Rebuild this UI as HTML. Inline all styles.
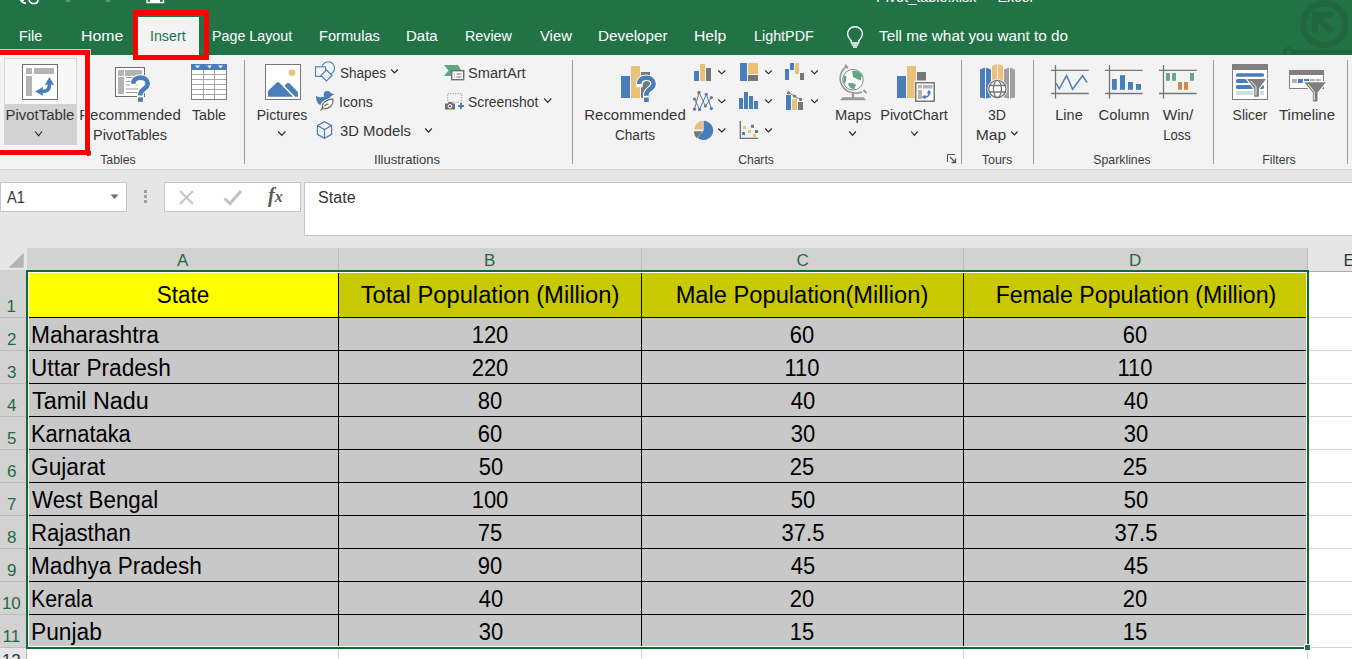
<!DOCTYPE html>
<html><head><meta charset="utf-8"><style>
html,body{margin:0;padding:0;}
body{width:1352px;height:659px;overflow:hidden;position:relative;background:#fff;font-family:"Liberation Sans",sans-serif;}
.t{position:absolute;white-space:nowrap;}
.r{position:absolute;}
</style></head><body>
<div class="r" style="left:0px;top:0px;width:1352px;height:55px;background:#217346;"></div><div class="t" style="top:-10.70px;font-size:15px;line-height:15px;color:#ffffff;left:875.54px;transform-origin:0 0;transform:scaleX(0.9645);white-space:pre;">Pivot_table.xlsx  -  Excel</div><svg class="r" style="left:18px;top:0px;" width="24" height="6" viewBox="0 0 24 6"><path d="M3 0 Q4 3 8 3.2 M11 0 Q12 4 17 3.5 Q20 3 20 0" fill="none" stroke="#fff" stroke-width="1.6"/><path d="M2 0.5 L6 0.5" stroke="#fff" stroke-width="1.5"/></svg><div class="r" style="left:66px;top:0px;width:4px;height:2px;background:#5a9a76;"></div><div class="r" style="left:106px;top:0px;width:4px;height:2px;background:#5a9a76;"></div><svg class="r" style="left:146px;top:0px;" width="19" height="4" viewBox="0 0 19 4"><path d="M1 0 V2.5 H17.5 V0" fill="none" stroke="#fff" stroke-width="1.4"/><rect x="4" y="0" width="10" height="2" fill="#fff"/></svg><svg class="r" style="left:1270px;top:0px;" width="82" height="60" viewBox="0 0 82 60"><circle cx="54.4" cy="24.2" r="20.9" fill="none" stroke="#22663f" stroke-width="6.6"/><rect x="42" y="11.8" width="20.8" height="6" fill="#22663f"/><rect x="42" y="11.8" width="6" height="21" fill="#22663f"/><path d="M45 15 L61.5 31.5" stroke="#22663f" stroke-width="6.5"/><rect x="21" y="50" width="61" height="4.2" fill="#22663f"/><circle cx="18.4" cy="52" r="4" fill="none" stroke="#22663f" stroke-width="3"/></svg><div class="r" style="left:138px;top:17px;width:61px;height:38px;background:#f3f3f3;"></div><div class="t" style="top:28.38px;font-size:15.5px;line-height:15.5px;color:#ffffff;left:18.77px;transform-origin:0 0;transform:scaleX(0.9291);">File</div><div class="t" style="top:28.38px;font-size:15.5px;line-height:15.5px;color:#ffffff;left:81.18px;transform-origin:0 0;transform:scaleX(1.0220);">Home</div><div class="t" style="top:28.38px;font-size:15.5px;line-height:15.5px;color:#217346;left:149.58px;transform-origin:0 0;transform:scaleX(0.9179);">Insert</div><div class="t" style="top:28.38px;font-size:15.5px;line-height:15.5px;color:#ffffff;left:212.38px;transform-origin:0 0;transform:scaleX(0.9212);">Page Layout</div><div class="t" style="top:28.38px;font-size:15.5px;line-height:15.5px;color:#ffffff;left:318.86px;transform-origin:0 0;transform:scaleX(0.9413);">Formulas</div><div class="t" style="top:28.38px;font-size:15.5px;line-height:15.5px;color:#ffffff;left:406.13px;transform-origin:0 0;transform:scaleX(0.9682);">Data</div><div class="t" style="top:28.38px;font-size:15.5px;line-height:15.5px;color:#ffffff;left:465.38px;transform-origin:0 0;transform:scaleX(0.9224);">Review</div><div class="t" style="top:28.38px;font-size:15.5px;line-height:15.5px;color:#ffffff;left:539.60px;transform-origin:0 0;transform:scaleX(0.9554);">View</div><div class="t" style="top:28.38px;font-size:15.5px;line-height:15.5px;color:#ffffff;left:598.21px;transform-origin:0 0;transform:scaleX(0.9858);">Developer</div><div class="t" style="top:28.38px;font-size:15.5px;line-height:15.5px;color:#ffffff;left:694.39px;transform-origin:0 0;transform:scaleX(1.0146);">Help</div><div class="t" style="top:28.38px;font-size:15.5px;line-height:15.5px;color:#ffffff;left:753.68px;transform-origin:0 0;transform:scaleX(0.9249);">LightPDF</div><div class="t" style="top:28.38px;font-size:15.5px;line-height:15.5px;color:#ffffff;left:878.50px;transform-origin:0 0;transform:scaleX(0.9887);">Tell me what you want to do</div><svg class="r" style="left:845px;top:25px;" width="20" height="23" viewBox="0 0 20 23"><path d="M10 1.8 C5.4 1.8 2.6 5.2 2.6 9 C2.6 12.2 4.6 13.8 6.3 15.8 L6.3 18 L13.7 18 L13.7 15.8 C15.4 13.8 17.4 12.2 17.4 9 C17.4 5.2 14.6 1.8 10 1.8 Z" fill="none" stroke="#ffffff" stroke-width="1.4"/><path d="M6.8 20 H13.2 M8 22 H12" stroke="#ffffff" stroke-width="1.3"/></svg><div class="r" style="left:0px;top:55px;width:1352px;height:114px;background:#f3f3f3;"></div><div class="r" style="left:0px;top:169px;width:1352px;height:1px;background:#d4d4d4;"></div><div class="r" style="left:244px;top:60px;width:1px;height:104px;background:#9c9c9c;"></div><div class="r" style="left:572px;top:60px;width:1px;height:104px;background:#9c9c9c;"></div><div class="r" style="left:961px;top:60px;width:1px;height:104px;background:#9c9c9c;"></div><div class="r" style="left:1033px;top:60px;width:1px;height:104px;background:#9c9c9c;"></div><div class="r" style="left:1213px;top:60px;width:1px;height:104px;background:#9c9c9c;"></div><div class="r" style="left:1347px;top:60px;width:1px;height:104px;background:#9c9c9c;"></div><div class="t" style="top:153.10px;font-size:13px;line-height:13px;color:#3b3b3b;left:-181.74px;width:600px;text-align:center;transform-origin:50% 0;transform:scaleX(0.9454);">Tables</div><div class="t" style="top:153.10px;font-size:13px;line-height:13px;color:#3b3b3b;left:107.25px;width:600px;text-align:center;transform-origin:50% 0;transform:scaleX(1.0023);">Illustrations</div><div class="t" style="top:153.10px;font-size:13px;line-height:13px;color:#3b3b3b;left:456.32px;width:600px;text-align:center;transform-origin:50% 0;transform:scaleX(0.9307);">Charts</div><div class="t" style="top:153.10px;font-size:13px;line-height:13px;color:#3b3b3b;left:696.71px;width:600px;text-align:center;transform-origin:50% 0;transform:scaleX(0.9570);">Tours</div><div class="t" style="top:153.10px;font-size:13px;line-height:13px;color:#3b3b3b;left:822.41px;width:600px;text-align:center;transform-origin:50% 0;transform:scaleX(0.9461);">Sparklines</div><div class="t" style="top:153.10px;font-size:13px;line-height:13px;color:#3b3b3b;left:979.24px;width:600px;text-align:center;transform-origin:50% 0;transform:scaleX(0.9487);">Filters</div><div class="r" style="left:4px;top:58px;width:73px;height:46px;background:#f7f7f7;box-sizing:border-box;border:1px solid #d6d6d6;border-bottom:none;"></div><div class="r" style="left:4px;top:104px;width:73px;height:41px;background:#d2d2d2;"></div><svg class="r" style="left:22px;top:64px;" width="36" height="36" viewBox="0 0 36 36"><rect x="0.5" y="0.5" width="35" height="35" fill="#fff" stroke="#6e6e6e"/><rect x="4" y="4" width="6" height="6" fill="#b3b3b3"/><rect x="12" y="4" width="20" height="6" fill="#b3b3b3"/><rect x="4" y="12" width="6" height="20" fill="#b3b3b3"/><path d="M27.4 18 L27.4 21 C27.4 25.5 25 27.4 21 27.4 L18 27.4" fill="none" stroke="#4a7ebb" stroke-width="3.6"/><path d="M22.7 21.3 L27.4 13 L32.1 21.3 L27.4 20 Z" fill="#4a7ebb"/><path d="M21.3 22.7 L13 27.4 L21.3 32.1 L20 27.4 Z" fill="#4a7ebb"/></svg><div class="t" style="top:107.38px;font-size:15.5px;line-height:15.5px;color:#363636;left:-260.28px;width:600px;text-align:center;transform-origin:50% 0;transform:scaleX(0.9615);">PivotTable</div><svg class="r" style="left:34px;top:130px;" width="10" height="8" viewBox="0 0 10 8"><path d="M1.2 1.5 L4.6 5.8 L7.9 1.5" fill="none" stroke="#262626" stroke-width="1.15"/></svg><svg class="r" style="left:113px;top:65px;" width="40" height="40" viewBox="0 0 40 40"><rect x="2.5" y="2.5" width="29" height="29" fill="#fff" stroke="#6e6e6e"/><rect x="5" y="5" width="6" height="6" fill="#b3b3b3"/><rect x="12" y="5" width="17" height="6" fill="#b3b3b3"/><rect x="5" y="12" width="6" height="17" fill="#b3b3b3"/><path d="M13 12.5 H25 M13 16.5 H25 M13 20 H25 M13 24 H25 M13 27.5 H25" stroke="#9a9a9a" stroke-width="1"/><g transform="translate(17.5,10.2)"><path d="M2.8 8.6 C2.8 4.3 6 2.4 10 2.4 C14.2 2.4 17.2 5 17.2 8.4 C17.2 11.5 14.8 12.8 12.8 14.4 C11 15.8 9.9 17 9.9 19.5 L9.9 20.3" fill="none" stroke="#fff" stroke-width="6.6" stroke-linecap="square"/><path d="M2.8 8.6 C2.8 4.3 6 2.4 10 2.4 C14.2 2.4 17.2 5 17.2 8.4 C17.2 11.5 14.8 12.8 12.8 14.4 C11 15.8 9.9 17 9.9 19.5 L9.9 20.3" fill="none" stroke="#4a7ebb" stroke-width="4.6"/><rect x="7" y="21.5" width="6" height="5.8" fill="#fff"/><rect x="7.6" y="22.1" width="4.8" height="4.6" fill="#4a7ebb"/></g></svg><div class="t" style="top:107.38px;font-size:15.5px;line-height:15.5px;color:#363636;left:-169.88px;width:600px;text-align:center;transform-origin:50% 0;transform:scaleX(0.9653);">Recommended</div><div class="t" style="top:127.38px;font-size:15.5px;line-height:15.5px;color:#363636;left:-170.33px;width:600px;text-align:center;transform-origin:50% 0;transform:scaleX(0.9336);">PivotTables</div><svg class="r" style="left:191px;top:64px;" width="36" height="36" viewBox="0 0 36 36"><rect x="0" y="0" width="36" height="36" fill="#fff"/><path d="M1 10.5 H35" stroke="#a6a6a6" stroke-width="1"/><path d="M1 15.5 H35" stroke="#a6a6a6" stroke-width="1"/><path d="M1 20.5 H35" stroke="#a6a6a6" stroke-width="1"/><path d="M1 25.5 H35" stroke="#a6a6a6" stroke-width="1"/><path d="M1 30.5 H35" stroke="#a6a6a6" stroke-width="1"/><path d="M12.5 6 V35 M23.5 6 V35" stroke="#a6a6a6"/><rect x="0.5" y="0.5" width="35" height="35" fill="none" stroke="#808080"/><rect x="0" y="0" width="36" height="6" fill="#4a7ebb"/><path d="M4 1.5 L9 1.5 L6.5 4.2 Z M16 1.5 L21 1.5 L18.5 4.2 Z M27 1.5 L32 1.5 L29.5 4.2 Z" fill="#fff"/></svg><div class="t" style="top:107.38px;font-size:15.5px;line-height:15.5px;color:#363636;left:-90.96px;width:600px;text-align:center;transform-origin:50% 0;transform:scaleX(0.9195);">Table</div><svg class="r" style="left:265px;top:64px;" width="36" height="36" viewBox="0 0 36 36"><rect x="0.5" y="0.5" width="35" height="35" fill="#fff" stroke="#777"/><circle cx="27" cy="8.7" r="3.3" fill="#e9c17a"/><path d="M3 32.8 L3 27.1 L12.1 18.2 L13.9 18.2 L28.1 32.8 Z" fill="#4a7ebb"/><path d="M19.4 21.7 L22.3 19.1 L24.1 19.1 L32.9 28 L32.9 32.8 L30.1 32.8 Z" fill="#4a7ebb"/></svg><div class="t" style="top:107.38px;font-size:15.5px;line-height:15.5px;color:#363636;left:-18.07px;width:600px;text-align:center;transform-origin:50% 0;transform:scaleX(0.9051);">Pictures</div><svg class="r" style="left:277px;top:130px;" width="10" height="7" viewBox="0 0 10 7"><path d="M1.2 1.5 L4.8 5.4 L8.4 1.5" fill="none" stroke="#262626" stroke-width="1.15"/></svg><svg class="r" style="left:313px;top:60px;" width="24" height="24" viewBox="0 0 24 24"><circle cx="15.2" cy="8.2" r="6.4" fill="none" stroke="#4a7ebb" stroke-width="1.1"/><rect x="2.5" y="6.8" width="10" height="9.6" fill="#f3f3f3" stroke="#4a7ebb" stroke-width="1.1"/><path d="M13.5 10 L19 15.5 L13.5 21 L8 15.5 Z" fill="#f3f3f3" stroke="#4a7ebb" stroke-width="1.1"/></svg><div class="t" style="top:65.38px;font-size:15.5px;line-height:15.5px;color:#363636;left:339.50px;transform-origin:0 0;transform:scaleX(0.8747);">Shapes</div><svg class="r" style="left:390px;top:68px;" width="10" height="7" viewBox="0 0 10 7"><path d="M1.2 1.5 L4.5 4.9 L7.8 1.5" fill="none" stroke="#262626" stroke-width="1.15"/></svg><svg class="r" style="left:312px;top:88px;" width="26" height="26" viewBox="0 0 26 26"><circle cx="15.4" cy="6.6" r="3.7" fill="#4a7ebb"/><path d="M18 4.8 L22.2 6.2 L18 8.8 Z" fill="#4a7ebb"/><path d="M4 8 C6.5 9.8 9.5 9.6 12.5 8.6 L18.2 9.6 C16.5 11.5 13 12 10.5 13.5 C9.5 14.5 9 15.8 8.5 17 C5.5 16 4 12.5 4 8 Z" fill="#4a7ebb"/><path d="M10.5 20.7 C9.3 16 13 11.6 20.8 11.2 C21.6 17.5 17.5 21.3 10.5 20.7 Z" fill="#fff" stroke="#f3f3f3" stroke-width="2.6"/><path d="M10.5 20.7 C9.3 16 13 11.6 20.8 11.2 C21.6 17.5 17.5 21.3 10.5 20.7 Z" fill="#fff" stroke="#666" stroke-width="1.2"/><path d="M12.3 18.3 C13.8 16.6 15 16 16.2 15.9 M8.3 22.6 L11.6 19.4" fill="none" stroke="#666" stroke-width="1.1"/></svg><div class="t" style="top:94.38px;font-size:15.5px;line-height:15.5px;color:#363636;left:338.59px;transform-origin:0 0;transform:scaleX(0.9147);">Icons</div><svg class="r" style="left:315px;top:120px;" width="19" height="20" viewBox="0 0 19 20"><path d="M9.5 1.8 L16.6 5.6 L16.6 14.4 L9.5 18.2 L2.4 14.4 L2.4 5.6 Z M2.4 5.6 L9.5 9.6 L16.6 5.6 M9.5 9.6 V18.2" fill="none" stroke="#4a7ebb" stroke-width="1.2"/></svg><div class="t" style="top:123.38px;font-size:15.5px;line-height:15.5px;color:#363636;left:339.50px;transform-origin:0 0;transform:scaleX(0.9578);">3D Models</div><svg class="r" style="left:424px;top:127px;" width="10" height="7" viewBox="0 0 10 7"><path d="M1.2 1.5 L4.5 5.2 L7.8 1.5" fill="none" stroke="#262626" stroke-width="1.15"/></svg><svg class="r" style="left:443px;top:64px;" width="22" height="17" viewBox="0 0 22 17"><path d="M1 1 L15 1 L18 6 L10 6 L10 12 L1 12 L5.5 6.5 Z" fill="#5fa882"/><rect x="8.7" y="6.7" width="12" height="9" fill="#fff" stroke="#6f6f6f" stroke-width="1.4"/><path d="M11 10 H12 M13.5 10 H18.5 M11 13 H12 M13.5 13 H18.5" stroke="#777" stroke-width="1"/></svg><div class="t" style="top:65.38px;font-size:15.5px;line-height:15.5px;color:#363636;left:468.40px;transform-origin:0 0;transform:scaleX(0.9412);">SmartArt</div><svg class="r" style="left:444px;top:92px;" width="22" height="19" viewBox="0 0 22 19"><rect x="3.7" y="1.7" width="14" height="8.5" fill="none" stroke="#888" stroke-width="1" stroke-dasharray="1 1.5"/><path d="M1 11.5 L4 11.5 L5 10 L8 10 L9 11.5 L11 11.5 L11 17.5 L1 17.5 Z" fill="#6f6f6f"/><circle cx="6" cy="14.3" r="1.8" fill="none" stroke="#fff" stroke-width="1"/><path d="M17 11 V17 M14 14 H20" stroke="#4a7ebb" stroke-width="2"/></svg><div class="t" style="top:94.38px;font-size:15.5px;line-height:15.5px;color:#363636;left:468.40px;transform-origin:0 0;transform:scaleX(0.8976);">Screenshot</div><svg class="r" style="left:543px;top:97px;" width="10" height="7" viewBox="0 0 10 7"><path d="M1.2 1.5 L4.8 5.3 L8.3 1.5" fill="none" stroke="#262626" stroke-width="1.15"/></svg><svg class="r" style="left:618px;top:63px;" width="42" height="42" viewBox="0 0 42 42"><rect x="3" y="13" width="9" height="22" fill="#4a7ebb"/><rect x="13" y="3" width="9" height="32" fill="#e9c17a"/><rect x="23" y="9" width="9" height="26" fill="#777777"/><g transform="translate(18.4,12.4)"><path d="M2.8 8.6 C2.8 4.3 6 2.4 10 2.4 C14.2 2.4 17.2 5 17.2 8.4 C17.2 11.5 14.8 12.8 12.8 14.4 C11 15.8 9.9 17 9.9 19.5 L9.9 20.3" fill="none" stroke="#fff" stroke-width="6.6" stroke-linecap="square"/><path d="M2.8 8.6 C2.8 4.3 6 2.4 10 2.4 C14.2 2.4 17.2 5 17.2 8.4 C17.2 11.5 14.8 12.8 12.8 14.4 C11 15.8 9.9 17 9.9 19.5 L9.9 20.3" fill="none" stroke="#4a7ebb" stroke-width="4.6"/><rect x="7" y="21.5" width="6" height="5.8" fill="#fff"/><rect x="7.6" y="22.1" width="4.8" height="4.6" fill="#4a7ebb"/></g></svg><div class="t" style="top:107.38px;font-size:15.5px;line-height:15.5px;color:#363636;left:335.32px;width:600px;text-align:center;transform-origin:50% 0;transform:scaleX(0.9653);">Recommended</div><div class="t" style="top:127.38px;font-size:15.5px;line-height:15.5px;color:#363636;left:335.39px;width:600px;text-align:center;transform-origin:50% 0;transform:scaleX(0.8780);">Charts</div><svg class="r" style="left:693px;top:62px;" width="20" height="20" viewBox="0 0 20 20"><rect x="1" y="9" width="5" height="10" fill="#4a7ebb"/><rect x="7" y="2" width="5" height="17" fill="#e9c17a"/><rect x="13" y="6" width="5" height="13" fill="#777777"/></svg><svg class="r" style="left:739px;top:62px;" width="20" height="20" viewBox="0 0 20 20"><rect x="1" y="1" width="7" height="18" fill="#4a7ebb"/><rect x="9" y="1" width="10" height="11" fill="#e9c17a"/><rect x="9" y="13" width="10" height="6" fill="#777777"/></svg><svg class="r" style="left:784px;top:62px;" width="21" height="20" viewBox="0 0 21 20"><rect x="1" y="7" width="4" height="11" fill="#4a7ebb"/><rect x="6" y="1" width="4" height="7" fill="#4a7ebb"/><rect x="11" y="1" width="4" height="11" fill="#e9c17a"/><rect x="16" y="11" width="4" height="7" fill="#777777"/></svg><svg class="r" style="left:692px;top:90px;" width="22" height="22" viewBox="0 0 22 22"><path d="M2.5 19.2 L7 2.3 L13.4 16 L19.4 7.6" fill="none" stroke="#777" stroke-width="1"/><path d="M2.5 9 L7.6 19.5 L14.3 4.3 L19.4 18.6" fill="none" stroke="#4a7ebb" stroke-width="1"/><circle cx="2.5" cy="19.2" r="1.6" fill="#777"/><circle cx="7" cy="2.3" r="1.6" fill="#777"/><circle cx="13.4" cy="16" r="1.6" fill="#777"/><circle cx="19.4" cy="7.6" r="1.6" fill="#777"/><circle cx="2.5" cy="9" r="1.6" fill="#4a7ebb"/><circle cx="7.6" cy="19.5" r="1.6" fill="#4a7ebb"/><circle cx="14.3" cy="4.3" r="1.6" fill="#4a7ebb"/><circle cx="19.4" cy="18.6" r="1.6" fill="#4a7ebb"/></svg><svg class="r" style="left:739px;top:91px;" width="20" height="19" viewBox="0 0 20 19"><rect x="0" y="7" width="4" height="11" fill="#4a7ebb"/><rect x="5" y="1" width="4" height="17" fill="#4a7ebb"/><rect x="10" y="5" width="4" height="13" fill="#4a7ebb"/><rect x="15" y="10" width="4" height="8" fill="#4a7ebb"/></svg><svg class="r" style="left:785px;top:91px;" width="20" height="20" viewBox="0 0 20 20"><path d="M3.4 1.3 L9.5 5.1 L15.6 8.4" fill="none" stroke="#777" stroke-width="1"/><rect x="1" y="4" width="5" height="15" fill="#4a7ebb"/><rect x="7" y="8" width="5" height="11" fill="#e9c17a"/><rect x="13" y="11" width="5" height="8" fill="#777777"/><circle cx="3.4" cy="1.8" r="1.6" fill="#777"/><circle cx="9.5" cy="5.1" r="1.6" fill="#777"/><circle cx="15.6" cy="8.4" r="1.6" fill="#777"/></svg><svg class="r" style="left:693px;top:120px;" width="22" height="22" viewBox="0 0 22 22"><path d="M10.6 10.4 L10.6 0.8000000000000007 A9.6 9.6 0 1 1 4.43 17.75 Z" fill="#4a7ebb"/><path d="M9.799999999999999 11.0 L3.63 18.35 A9.6 9.6 0 0 1 1.00 11.20 L9.799999999999999 11.200000000000001 Z" fill="#777777"/><path d="M9.799999999999999 9.6 L1.00 9.60 A9.6 9.6 0 0 1 9.799999999999999 0.8000000000000007 Z" fill="#e9c17a"/></svg><svg class="r" style="left:739px;top:120px;" width="20" height="20" viewBox="0 0 20 20"><path d="M1.3 1 V18.3 H19" fill="none" stroke="#6f6f6f" stroke-width="1.3"/><rect x="4" y="6" width="3" height="3" fill="#e9c17a"/><rect x="12" y="4.8" width="3" height="3" fill="#4a7ebb"/><rect x="9" y="10" width="3" height="3" fill="#e9c17a"/><rect x="3" y="12" width="3" height="3" fill="#4a7ebb"/><rect x="16" y="10" width="3" height="3" fill="#4a7ebb"/><rect x="14" y="14" width="3" height="3" fill="#e9c17a"/></svg><svg class="r" style="left:717px;top:69px;" width="10" height="7" viewBox="0 0 10 7"><path d="M1.2 1.5 L4.8 4.8 L8.3 1.5" fill="none" stroke="#262626" stroke-width="1.15"/></svg><svg class="r" style="left:717px;top:98px;" width="10" height="7" viewBox="0 0 10 7"><path d="M1.2 1.5 L4.8 4.8 L8.3 1.5" fill="none" stroke="#262626" stroke-width="1.15"/></svg><svg class="r" style="left:764px;top:69px;" width="9" height="7" viewBox="0 0 9 7"><path d="M1.2 1.5 L4.4 4.8 L7.7 1.5" fill="none" stroke="#262626" stroke-width="1.15"/></svg><svg class="r" style="left:764px;top:98px;" width="9" height="7" viewBox="0 0 9 7"><path d="M1.2 1.5 L4.4 4.8 L7.7 1.5" fill="none" stroke="#262626" stroke-width="1.15"/></svg><svg class="r" style="left:810px;top:69px;" width="10" height="7" viewBox="0 0 10 7"><path d="M1.2 1.5 L4.5 4.8 L7.8 1.5" fill="none" stroke="#262626" stroke-width="1.15"/></svg><svg class="r" style="left:810px;top:98px;" width="10" height="7" viewBox="0 0 10 7"><path d="M1.2 1.5 L4.5 4.8 L7.8 1.5" fill="none" stroke="#262626" stroke-width="1.15"/></svg><svg class="r" style="left:717px;top:127px;" width="10" height="7" viewBox="0 0 10 7"><path d="M1.2 1.5 L4.8 4.9 L8.3 1.5" fill="none" stroke="#262626" stroke-width="1.15"/></svg><svg class="r" style="left:764px;top:127px;" width="9" height="7" viewBox="0 0 9 7"><path d="M1.2 1.5 L4.4 4.9 L7.7 1.5" fill="none" stroke="#262626" stroke-width="1.15"/></svg><svg class="r" style="left:836px;top:62px;" width="34" height="40" viewBox="0 0 34 40"><path d="M10.5 4.5 C4 9 2.5 17 6 23.5 C10 30 18 33 26 30" fill="none" stroke="#9a9a9a" stroke-width="1.6"/><path d="M9 3 L12 6 M27.5 28 L30.5 31" stroke="#9a9a9a" stroke-width="1.8"/><circle cx="17" cy="17.7" r="10.3" fill="#fff" stroke="#888" stroke-width="1"/><path d="M16 9 C19 8 24 9 26 13 L25 18 C22 18 20 16 17 15 Z M7.5 14 C9 13 10.5 14 10.5 16 L9 22 L7.5 21 Z M13 21 C16 21 19 21 20 23 L18 27.5 C15 27 13 25 12 22 Z" fill="#5fa882"/><path d="M17 30 V36" stroke="#9a9a9a" stroke-width="2.2"/><path d="M4 38.2 L6.5 35.2 L27.5 35.2 L30 38.2 Z" fill="#9a9a9a"/></svg><div class="t" style="top:107.38px;font-size:15.5px;line-height:15.5px;color:#363636;left:552.70px;width:600px;text-align:center;transform-origin:50% 0;transform:scaleX(0.9528);">Maps</div><svg class="r" style="left:848px;top:130px;" width="10" height="7" viewBox="0 0 10 7"><path d="M1.2 1.5 L4.5 5.3 L7.8 1.5" fill="none" stroke="#262626" stroke-width="1.15"/></svg><svg class="r" style="left:895px;top:64px;" width="42" height="40" viewBox="0 0 42 40"><rect x="2" y="12" width="9" height="22" fill="#4a7ebb"/><rect x="12" y="2" width="9" height="32" fill="#e9c17a"/><rect x="22" y="8" width="9" height="9" fill="#777777"/><rect x="20" y="17" width="21" height="22" fill="#fff" stroke="#f3f3f3" stroke-width="1"/><rect x="20.75" y="18.75" width="18.5" height="18.5" fill="#fff" stroke="#777" stroke-width="1.5"/><rect x="23" y="21" width="4" height="3.5" fill="#b3b3b3"/><rect x="28" y="21" width="9.5" height="3.5" fill="#b3b3b3"/><rect x="23" y="26" width="4" height="9" fill="#b3b3b3"/><path d="M34 29 C34 32 33 33 30 33" fill="none" stroke="#4a7ebb" stroke-width="1.6"/><path d="M31.8 29.5 L34 25.5 L36.2 29.5 Z M30.5 30.8 L26.5 33 L30.5 35.2 Z" fill="#4a7ebb"/></svg><div class="t" style="top:107.38px;font-size:15.5px;line-height:15.5px;color:#363636;left:614.31px;width:600px;text-align:center;transform-origin:50% 0;transform:scaleX(0.9326);">PivotChart</div><svg class="r" style="left:910px;top:130px;" width="9" height="7" viewBox="0 0 9 7"><path d="M1.2 1.5 L4.4 5.3 L7.7 1.5" fill="none" stroke="#262626" stroke-width="1.15"/></svg><svg class="r" style="left:946px;top:153px;" width="12" height="12" viewBox="0 0 12 12"><path d="M1.5 9 V1.5 H9" fill="none" stroke="#555" stroke-width="1.1"/><path d="M4 4 L9.5 9.5 M5.5 9.5 H9.5 V5.5" fill="none" stroke="#555" stroke-width="1.3"/></svg><svg class="r" style="left:978px;top:62px;" width="40" height="40" viewBox="0 0 40 40"><path d="M2 7.5 L7 5.5 L7 36.5 L2 35.5 Z M8 5.5 L13 7.5 L13 35.5 L8 36.5 Z" fill="#4a7ebb"/><path d="M14 4 L19 2 L19 20 L14 20 Z M20 2 L25 4 L25 20 L20 20 Z" fill="#e9c17a"/><path d="M26 7.5 L31 5.5 L31 36.5 L26 35.5 Z M32 5.5 L37 7.5 L37 35.5 L32 36.5 Z" fill="#a0a0a0"/><circle cx="19.4" cy="27" r="10" fill="#f3f3f3"/><circle cx="19.4" cy="27" r="8.6" fill="#fff" stroke="#777" stroke-width="1.3"/><ellipse cx="19.4" cy="27" rx="4" ry="8.6" fill="none" stroke="#777" stroke-width="1.3"/><path d="M11 23.5 H28 M11 30 H28" stroke="#777" stroke-width="1.3"/></svg><div class="t" style="top:107.38px;font-size:15.5px;line-height:15.5px;color:#363636;left:697.49px;width:600px;text-align:center;transform-origin:50% 0;transform:scaleX(0.9072);">3D</div><div class="t" style="top:127.38px;font-size:15.5px;line-height:15.5px;color:#363636;left:690.81px;width:600px;text-align:center;transform-origin:50% 0;transform:scaleX(1.0094);">Map</div><svg class="r" style="left:1010px;top:130px;" width="9" height="7" viewBox="0 0 9 7"><path d="M1.2 1.5 L4.4 4.9 L7.5 1.5" fill="none" stroke="#262626" stroke-width="1.15"/></svg><svg class="r" style="left:1051px;top:64px;" width="40" height="36" viewBox="0 0 40 36"><path d="M4.5 1 V34.5 M0 6.4 H37.7 M0 29.5 H37.7" fill="none" stroke="#777" stroke-width="1.3"/><path d="M5 19 L8.3 24.8 L15.6 11.5 L21.6 25.2 L31.6 11.5 L36 18.5" fill="none" stroke="#4a7ebb" stroke-width="1.5"/></svg><svg class="r" style="left:1105px;top:64px;" width="40" height="36" viewBox="0 0 40 36"><path d="M4.5 1 V34.5 M0 6.4 H37.7 M0 29.5 H37.7" fill="none" stroke="#777" stroke-width="1.3"/><rect x="7" y="15" width="4.8" height="10.8" fill="#4a7ebb"/><rect x="15" y="11.2" width="5" height="14.6" fill="#4a7ebb"/><rect x="23" y="18" width="5" height="7.8" fill="#4a7ebb"/><rect x="31" y="20" width="5" height="5.8" fill="#4a7ebb"/></svg><svg class="r" style="left:1159px;top:64px;" width="40" height="36" viewBox="0 0 40 36"><path d="M4.5 1 V34.5 M0 6.4 H37.7 M0 29.5 H37.7" fill="none" stroke="#777" stroke-width="1.3"/><rect x="7" y="9" width="4" height="7.8" fill="#6aa787"/><rect x="13" y="9" width="4" height="7.8" fill="#6aa787"/><rect x="31" y="9" width="4" height="7.8" fill="#6aa787"/><rect x="19" y="18" width="4" height="7.8" fill="#d08a4b"/><rect x="25" y="18" width="4" height="7.8" fill="#d08a4b"/></svg><div class="t" style="top:107.38px;font-size:15.5px;line-height:15.5px;color:#363636;left:769.27px;width:600px;text-align:center;transform-origin:50% 0;transform:scaleX(0.9355);">Line</div><div class="t" style="top:107.38px;font-size:15.5px;line-height:15.5px;color:#363636;left:823.85px;width:600px;text-align:center;transform-origin:50% 0;transform:scaleX(0.9528);">Column</div><div class="t" style="top:107.38px;font-size:15.5px;line-height:15.5px;color:#363636;left:877.96px;width:600px;text-align:center;transform-origin:50% 0;transform:scaleX(0.9907);">Win/</div><div class="t" style="top:127.38px;font-size:15.5px;line-height:15.5px;color:#363636;left:877.37px;width:600px;text-align:center;transform-origin:50% 0;transform:scaleX(0.8440);">Loss</div><svg class="r" style="left:1232px;top:64px;" width="36" height="36" viewBox="0 0 36 36"><rect x="0.5" y="0.5" width="35" height="35" fill="#fff" stroke="#7f7f7f"/><rect x="0" y="0" width="36" height="6" fill="#7f7f7f"/><rect x="4" y="9.2" width="28" height="3.6" rx="1.5" fill="#4a7ebb"/><rect x="4" y="15" width="28" height="4" rx="1.5" fill="#4a7ebb"/><rect x="4" y="21" width="28" height="4" rx="1.5" fill="#4a7ebb"/><rect x="4" y="27" width="28" height="4" fill="#cde0db"/><path d="M15.1 15.1 L33.9 15.1 L26.9 24.4 L26.9 32.8 L22.2 32.8 L22.2 24.4 Z" fill="#fff" stroke="#fff" stroke-width="2.2"/><path d="M15.1 15.1 L33.9 15.1 L26.9 24.4 L26.9 32.8 L22.2 32.8 L22.2 24.4 Z" fill="#7f7f7f"/><path d="M19 17 L24 22.8 L24 31.3" fill="none" stroke="#fff" stroke-width="0.9"/></svg><div class="t" style="top:107.38px;font-size:15.5px;line-height:15.5px;color:#363636;left:950.07px;width:600px;text-align:center;transform-origin:50% 0;transform:scaleX(0.8965);">Slicer</div><svg class="r" style="left:1288px;top:69px;" width="40" height="34" viewBox="0 0 40 34"><rect x="1.5" y="1.5" width="34" height="18" fill="#fff" stroke="#7f7f7f"/><rect x="1" y="1" width="35" height="5" fill="#7f7f7f"/><rect x="4" y="10" width="5" height="4" fill="#b3b3b3"/><rect x="10" y="10" width="5" height="4" fill="#4a7ebb"/><rect x="16" y="10" width="5" height="2" fill="#4a7ebb"/><rect x="22" y="10" width="5" height="2" fill="#b3b3b3"/><rect x="28" y="10" width="5" height="2" fill="#b3b3b3"/><path d="M16.2 13.3 L38 13.3 L29.6 23.5 L29.6 32.5 L24.8 32.5 L24.8 23.5 Z" fill="#fff" stroke="#fff" stroke-width="2.2"/><path d="M16.2 13.3 L38 13.3 L29.6 23.5 L29.6 32.5 L24.8 32.5 L24.8 23.5 Z" fill="#7f7f7f"/><path d="M20.3 15.3 L26.2 22.8 L26.2 31" fill="none" stroke="#fff" stroke-width="0.9"/></svg><div class="t" style="top:107.38px;font-size:15.5px;line-height:15.5px;color:#363636;left:1007.25px;width:600px;text-align:center;transform-origin:50% 0;transform:scaleX(0.9673);">Timeline</div><div class="r" style="left:-10px;top:50px;width:100px;height:105px;box-sizing:border-box;border:5px solid #ff0000;box-shadow:0 0 0 1px rgba(240,255,255,0.7), inset 0 0 0 1px rgba(240,255,255,0.7);"></div><div class="r" style="left:87px;top:151px;width:4px;height:5px;background:#ff0000;border-radius:0 0 2px 0;"></div><div class="r" style="left:133px;top:10px;width:76px;height:50px;box-sizing:border-box;border:5px solid #ff0000;"></div><div class="r" style="left:0px;top:170px;width:1352px;height:78px;background:#e6e6e6;"></div><div class="r" style="left:0px;top:182px;width:127px;height:30px;background:#ffffff;box-sizing:border-box;border:1px solid #c6c6c6;"></div><div class="t" style="top:189.96px;font-size:16px;line-height:16px;color:#363636;left:7.10px;transform-origin:0 0;transform:scaleX(0.9099);">A1</div><svg class="r" style="left:110px;top:194px;" width="10" height="6" viewBox="0 0 10 6"><path d="M0.5 0.5 L8.5 0.5 L4.5 5 Z" fill="#6a6a6a"/></svg><div class="r" style="left:144px;top:190px;width:3px;height:3px;background:#a0a0a0;"></div><div class="r" style="left:144px;top:195px;width:3px;height:3px;background:#a0a0a0;"></div><div class="r" style="left:144px;top:200px;width:3px;height:3px;background:#a0a0a0;"></div><div class="r" style="left:164px;top:182px;width:137px;height:30px;background:#ffffff;box-sizing:border-box;border:1px solid #c6c6c6;"></div><svg class="r" style="left:178px;top:189px;" width="18" height="16" viewBox="0 0 18 16"><path d="M2 2 L15 15 M15 2 L2 15" stroke="#c3c3c3" stroke-width="1.8" fill="none"/></svg><svg class="r" style="left:222px;top:189px;" width="21" height="17" viewBox="0 0 21 17"><path d="M2.5 9.5 L8 14.5 L19 2" stroke="#c3c3c3" stroke-width="3" fill="none"/></svg><div class="t" style="left:268px;top:184px;font-family:'Liberation Serif';font-style:italic;font-weight:bold;font-size:20px;line-height:22px;color:#5a5a5a;">f<span style="font-size:16px;">x</span></div><div class="r" style="left:304px;top:182px;width:1048px;height:54px;background:#ffffff;box-sizing:border-box;border:1px solid #c6c6c6;border-right:none;"></div><div class="t" style="top:189.76px;font-size:16px;line-height:16px;color:#363636;left:318.00px;transform-origin:0 0;transform:scaleX(1.0091);">State</div><div class="r" style="left:0px;top:248px;width:27px;height:22px;background:#e6e6e6;"></div><svg class="r" style="left:8px;top:252px;" width="16" height="16" viewBox="0 0 16 16"><path d="M15.7 0.7 L15.7 15.7 L0.7 15.7 Z" fill="#b4b4b4"/></svg><div class="r" style="left:27px;top:248px;width:1280px;height:22px;background:#d2d2d2;"></div><div class="r" style="left:338px;top:248px;width:1px;height:22px;background:#bdbdbd;"></div><div class="r" style="left:641px;top:248px;width:1px;height:22px;background:#bdbdbd;"></div><div class="r" style="left:963px;top:248px;width:1px;height:22px;background:#bdbdbd;"></div><div class="r" style="left:1307px;top:248px;width:1px;height:22px;background:#bdbdbd;"></div><div class="r" style="left:1308px;top:248px;width:44px;height:23px;background:#e6e6e6;"></div><div class="r" style="left:1308px;top:271px;width:44px;height:1px;background:#ababab;"></div><div class="t" style="top:251.81px;font-size:17px;line-height:17px;color:#1f6b41;left:-117.33px;width:600px;text-align:center;transform-origin:50% 0;">A</div><div class="t" style="top:251.81px;font-size:17px;line-height:17px;color:#1f6b41;left:189.67px;width:600px;text-align:center;transform-origin:50% 0;">B</div><div class="t" style="top:251.81px;font-size:17px;line-height:17px;color:#1f6b41;left:502.64px;width:600px;text-align:center;transform-origin:50% 0;">C</div><div class="t" style="top:251.81px;font-size:17px;line-height:17px;color:#1f6b41;left:835.14px;width:600px;text-align:center;transform-origin:50% 0;">D</div><div class="t" style="top:251.91px;font-size:17px;line-height:17px;color:#363636;left:1343.60px;transform-origin:0 0;">E</div><div class="r" style="left:0px;top:270px;width:26px;height:389px;background:#d2d2d2;"></div><div class="r" style="left:0px;top:647px;width:26px;height:12px;background:#e6e6e6;"></div><div class="r" style="left:26px;top:649px;width:1px;height:10px;background:#b4b4b4;"></div><div class="r" style="left:28px;top:272px;width:1324px;height:387px;background:#ffffff;"></div><div class="r" style="left:1309px;top:317px;width:43px;height:1px;background:#d4d4d4;"></div><div class="r" style="left:0px;top:317px;width:26px;height:1px;background:#bdbdbd;"></div><div class="r" style="left:1309px;top:350px;width:43px;height:1px;background:#d4d4d4;"></div><div class="r" style="left:0px;top:350px;width:26px;height:1px;background:#bdbdbd;"></div><div class="r" style="left:1309px;top:383px;width:43px;height:1px;background:#d4d4d4;"></div><div class="r" style="left:0px;top:383px;width:26px;height:1px;background:#bdbdbd;"></div><div class="r" style="left:1309px;top:416px;width:43px;height:1px;background:#d4d4d4;"></div><div class="r" style="left:0px;top:416px;width:26px;height:1px;background:#bdbdbd;"></div><div class="r" style="left:1309px;top:449px;width:43px;height:1px;background:#d4d4d4;"></div><div class="r" style="left:0px;top:449px;width:26px;height:1px;background:#bdbdbd;"></div><div class="r" style="left:1309px;top:482px;width:43px;height:1px;background:#d4d4d4;"></div><div class="r" style="left:0px;top:482px;width:26px;height:1px;background:#bdbdbd;"></div><div class="r" style="left:1309px;top:515px;width:43px;height:1px;background:#d4d4d4;"></div><div class="r" style="left:0px;top:515px;width:26px;height:1px;background:#bdbdbd;"></div><div class="r" style="left:1309px;top:548px;width:43px;height:1px;background:#d4d4d4;"></div><div class="r" style="left:0px;top:548px;width:26px;height:1px;background:#bdbdbd;"></div><div class="r" style="left:1309px;top:581px;width:43px;height:1px;background:#d4d4d4;"></div><div class="r" style="left:0px;top:581px;width:26px;height:1px;background:#bdbdbd;"></div><div class="r" style="left:1309px;top:614px;width:43px;height:1px;background:#d4d4d4;"></div><div class="r" style="left:0px;top:614px;width:26px;height:1px;background:#bdbdbd;"></div><div class="r" style="left:1309px;top:647px;width:43px;height:1px;background:#d4d4d4;"></div><div class="r" style="left:0px;top:647px;width:26px;height:1px;background:#bdbdbd;"></div><div class="r" style="left:1307px;top:647px;width:45px;height:1px;background:#d4d4d4;"></div><div class="r" style="left:338px;top:649px;width:1px;height:10px;background:#d4d4d4;"></div><div class="r" style="left:641px;top:649px;width:1px;height:10px;background:#d4d4d4;"></div><div class="r" style="left:963px;top:649px;width:1px;height:10px;background:#d4d4d4;"></div><div class="r" style="left:1307px;top:649px;width:1px;height:10px;background:#d4d4d4;"></div><div class="r" style="left:29px;top:273px;width:309px;height:44px;background:#ffff00;"></div><div class="r" style="left:339px;top:273px;width:968px;height:44px;background:#c9c900;"></div><div class="r" style="left:29px;top:318px;width:1278px;height:32px;background:#c8c8c8;"></div><div class="r" style="left:29px;top:351px;width:1278px;height:32px;background:#c8c8c8;"></div><div class="r" style="left:29px;top:384px;width:1278px;height:32px;background:#c8c8c8;"></div><div class="r" style="left:29px;top:417px;width:1278px;height:32px;background:#c8c8c8;"></div><div class="r" style="left:29px;top:450px;width:1278px;height:32px;background:#c8c8c8;"></div><div class="r" style="left:29px;top:483px;width:1278px;height:32px;background:#c8c8c8;"></div><div class="r" style="left:29px;top:516px;width:1278px;height:32px;background:#c8c8c8;"></div><div class="r" style="left:29px;top:549px;width:1278px;height:32px;background:#c8c8c8;"></div><div class="r" style="left:29px;top:582px;width:1278px;height:32px;background:#c8c8c8;"></div><div class="r" style="left:29px;top:615px;width:1278px;height:31px;background:#c8c8c8;"></div><div class="r" style="left:29px;top:317px;width:1278px;height:1px;background:#000000;"></div><div class="r" style="left:29px;top:350px;width:1278px;height:1px;background:#000000;"></div><div class="r" style="left:29px;top:383px;width:1278px;height:1px;background:#000000;"></div><div class="r" style="left:29px;top:416px;width:1278px;height:1px;background:#000000;"></div><div class="r" style="left:29px;top:449px;width:1278px;height:1px;background:#000000;"></div><div class="r" style="left:29px;top:482px;width:1278px;height:1px;background:#000000;"></div><div class="r" style="left:29px;top:515px;width:1278px;height:1px;background:#000000;"></div><div class="r" style="left:29px;top:548px;width:1278px;height:1px;background:#000000;"></div><div class="r" style="left:29px;top:581px;width:1278px;height:1px;background:#000000;"></div><div class="r" style="left:29px;top:614px;width:1278px;height:1px;background:#000000;"></div><div class="r" style="left:338px;top:273px;width:1px;height:374px;background:#000000;"></div><div class="r" style="left:641px;top:273px;width:1px;height:374px;background:#000000;"></div><div class="r" style="left:963px;top:273px;width:1px;height:374px;background:#000000;"></div><div class="r" style="left:26px;top:270px;width:1283px;height:379px;box-sizing:border-box;border:2px solid #0f6a37;"></div><div class="r" style="left:28px;top:272px;width:1279px;height:375px;box-sizing:border-box;border:1px solid #ffffff;"></div><div class="r" style="left:1304px;top:644px;width:7px;height:7px;background:#ffffff;"></div><div class="r" style="left:1305px;top:645px;width:5px;height:5px;background:#1e7145;"></div><div class="t" style="top:297.71px;font-size:17px;line-height:17px;color:#1f6b41;left:-288.67px;width:600px;text-align:center;transform-origin:50% 0;">1</div><div class="t" style="top:330.71px;font-size:17px;line-height:17px;color:#1f6b41;left:-288.17px;width:600px;text-align:center;transform-origin:50% 0;">2</div><div class="t" style="top:363.71px;font-size:17px;line-height:17px;color:#1f6b41;left:-288.17px;width:600px;text-align:center;transform-origin:50% 0;">3</div><div class="t" style="top:396.71px;font-size:17px;line-height:17px;color:#1f6b41;left:-288.17px;width:600px;text-align:center;transform-origin:50% 0;">4</div><div class="t" style="top:429.71px;font-size:17px;line-height:17px;color:#1f6b41;left:-288.17px;width:600px;text-align:center;transform-origin:50% 0;">5</div><div class="t" style="top:462.71px;font-size:17px;line-height:17px;color:#1f6b41;left:-288.17px;width:600px;text-align:center;transform-origin:50% 0;">6</div><div class="t" style="top:495.71px;font-size:17px;line-height:17px;color:#1f6b41;left:-288.17px;width:600px;text-align:center;transform-origin:50% 0;">7</div><div class="t" style="top:528.71px;font-size:17px;line-height:17px;color:#1f6b41;left:-288.17px;width:600px;text-align:center;transform-origin:50% 0;">8</div><div class="t" style="top:561.71px;font-size:17px;line-height:17px;color:#1f6b41;left:-288.17px;width:600px;text-align:center;transform-origin:50% 0;">9</div><div class="t" style="top:594.71px;font-size:17px;line-height:17px;color:#1f6b41;left:-288.67px;width:600px;text-align:center;transform-origin:50% 0;">10</div><div class="t" style="top:627.71px;font-size:17px;line-height:17px;color:#1f6b41;left:-288.67px;width:600px;text-align:center;transform-origin:50% 0;">11</div><div class="t" style="top:651.71px;font-size:17px;line-height:17px;color:#363636;left:-288.67px;width:600px;text-align:center;transform-origin:50% 0;">12</div><div class="t" style="top:283.73px;font-size:23px;line-height:23px;color:#000000;left:-117.10px;width:600px;text-align:center;transform-origin:50% 0;transform:scaleX(0.9766);">State</div><div class="t" style="top:283.73px;font-size:23px;line-height:23px;color:#000000;left:189.84px;width:600px;text-align:center;transform-origin:50% 0;transform:scaleX(1.0324);">Total Population (Million)</div><div class="t" style="top:283.73px;font-size:23px;line-height:23px;color:#000000;left:502.32px;width:600px;text-align:center;transform-origin:50% 0;transform:scaleX(1.0296);">Male Population(Million)</div><div class="t" style="top:283.73px;font-size:23px;line-height:23px;color:#000000;left:835.53px;width:600px;text-align:center;transform-origin:50% 0;transform:scaleX(1.0072);">Female Population (Million)</div><div class="t" style="top:323.83px;font-size:23px;line-height:23px;color:#000000;left:31.31px;transform-origin:0 0;transform:scaleX(0.9897);">Maharashtra</div><div class="t" style="top:323.83px;font-size:23px;line-height:23px;color:#000000;left:190.40px;width:600px;text-align:center;transform-origin:50% 0;transform:scaleX(0.9550);">120</div><div class="t" style="top:323.83px;font-size:23px;line-height:23px;color:#000000;left:502.40px;width:600px;text-align:center;transform-origin:50% 0;transform:scaleX(0.9550);">60</div><div class="t" style="top:323.83px;font-size:23px;line-height:23px;color:#000000;left:835.40px;width:600px;text-align:center;transform-origin:50% 0;transform:scaleX(0.9550);">60</div><div class="t" style="top:356.83px;font-size:23px;line-height:23px;color:#000000;left:31.32px;transform-origin:0 0;transform:scaleX(0.9850);">Uttar Pradesh</div><div class="t" style="top:356.83px;font-size:23px;line-height:23px;color:#000000;left:190.40px;width:600px;text-align:center;transform-origin:50% 0;transform:scaleX(0.9550);">220</div><div class="t" style="top:356.83px;font-size:23px;line-height:23px;color:#000000;left:502.40px;width:600px;text-align:center;transform-origin:50% 0;transform:scaleX(0.9550);">110</div><div class="t" style="top:356.83px;font-size:23px;line-height:23px;color:#000000;left:835.40px;width:600px;text-align:center;transform-origin:50% 0;transform:scaleX(0.9550);">110</div><div class="t" style="top:389.83px;font-size:23px;line-height:23px;color:#000000;left:32.30px;transform-origin:0 0;transform:scaleX(1.0153);">Tamil Nadu</div><div class="t" style="top:389.83px;font-size:23px;line-height:23px;color:#000000;left:190.40px;width:600px;text-align:center;transform-origin:50% 0;transform:scaleX(0.9550);">80</div><div class="t" style="top:389.83px;font-size:23px;line-height:23px;color:#000000;left:502.88px;width:600px;text-align:center;transform-origin:50% 0;transform:scaleX(0.9550);">40</div><div class="t" style="top:389.83px;font-size:23px;line-height:23px;color:#000000;left:835.88px;width:600px;text-align:center;transform-origin:50% 0;transform:scaleX(0.9550);">40</div><div class="t" style="top:422.83px;font-size:23px;line-height:23px;color:#000000;left:31.35px;transform-origin:0 0;transform:scaleX(0.9514);">Karnataka</div><div class="t" style="top:422.83px;font-size:23px;line-height:23px;color:#000000;left:190.40px;width:600px;text-align:center;transform-origin:50% 0;transform:scaleX(0.9550);">60</div><div class="t" style="top:422.83px;font-size:23px;line-height:23px;color:#000000;left:502.88px;width:600px;text-align:center;transform-origin:50% 0;transform:scaleX(0.9550);">30</div><div class="t" style="top:422.83px;font-size:23px;line-height:23px;color:#000000;left:835.88px;width:600px;text-align:center;transform-origin:50% 0;transform:scaleX(0.9550);">30</div><div class="t" style="top:455.83px;font-size:23px;line-height:23px;color:#000000;left:31.31px;transform-origin:0 0;transform:scaleX(0.9862);">Gujarat</div><div class="t" style="top:455.83px;font-size:23px;line-height:23px;color:#000000;left:190.88px;width:600px;text-align:center;transform-origin:50% 0;transform:scaleX(0.9550);">50</div><div class="t" style="top:455.83px;font-size:23px;line-height:23px;color:#000000;left:502.40px;width:600px;text-align:center;transform-origin:50% 0;transform:scaleX(0.9550);">25</div><div class="t" style="top:455.83px;font-size:23px;line-height:23px;color:#000000;left:835.40px;width:600px;text-align:center;transform-origin:50% 0;transform:scaleX(0.9550);">25</div><div class="t" style="top:488.83px;font-size:23px;line-height:23px;color:#000000;left:32.30px;transform-origin:0 0;transform:scaleX(0.9700);">West Bengal</div><div class="t" style="top:488.83px;font-size:23px;line-height:23px;color:#000000;left:190.40px;width:600px;text-align:center;transform-origin:50% 0;transform:scaleX(0.9550);">100</div><div class="t" style="top:488.83px;font-size:23px;line-height:23px;color:#000000;left:502.88px;width:600px;text-align:center;transform-origin:50% 0;transform:scaleX(0.9550);">50</div><div class="t" style="top:488.83px;font-size:23px;line-height:23px;color:#000000;left:835.88px;width:600px;text-align:center;transform-origin:50% 0;transform:scaleX(0.9550);">50</div><div class="t" style="top:521.83px;font-size:23px;line-height:23px;color:#000000;left:31.34px;transform-origin:0 0;transform:scaleX(0.9629);">Rajasthan</div><div class="t" style="top:521.83px;font-size:23px;line-height:23px;color:#000000;left:190.40px;width:600px;text-align:center;transform-origin:50% 0;transform:scaleX(0.9550);">75</div><div class="t" style="top:521.83px;font-size:23px;line-height:23px;color:#000000;left:502.88px;width:600px;text-align:center;transform-origin:50% 0;transform:scaleX(0.9550);">37.5</div><div class="t" style="top:521.83px;font-size:23px;line-height:23px;color:#000000;left:835.88px;width:600px;text-align:center;transform-origin:50% 0;transform:scaleX(0.9550);">37.5</div><div class="t" style="top:554.83px;font-size:23px;line-height:23px;color:#000000;left:31.32px;transform-origin:0 0;transform:scaleX(0.9820);">Madhya Pradesh</div><div class="t" style="top:554.83px;font-size:23px;line-height:23px;color:#000000;left:190.40px;width:600px;text-align:center;transform-origin:50% 0;transform:scaleX(0.9550);">90</div><div class="t" style="top:554.83px;font-size:23px;line-height:23px;color:#000000;left:502.88px;width:600px;text-align:center;transform-origin:50% 0;transform:scaleX(0.9550);">45</div><div class="t" style="top:554.83px;font-size:23px;line-height:23px;color:#000000;left:835.88px;width:600px;text-align:center;transform-origin:50% 0;transform:scaleX(0.9550);">45</div><div class="t" style="top:587.83px;font-size:23px;line-height:23px;color:#000000;left:31.37px;transform-origin:0 0;transform:scaleX(0.9286);">Kerala</div><div class="t" style="top:587.83px;font-size:23px;line-height:23px;color:#000000;left:190.88px;width:600px;text-align:center;transform-origin:50% 0;transform:scaleX(0.9550);">40</div><div class="t" style="top:587.83px;font-size:23px;line-height:23px;color:#000000;left:502.40px;width:600px;text-align:center;transform-origin:50% 0;transform:scaleX(0.9550);">20</div><div class="t" style="top:587.83px;font-size:23px;line-height:23px;color:#000000;left:835.40px;width:600px;text-align:center;transform-origin:50% 0;transform:scaleX(0.9550);">20</div><div class="t" style="top:620.83px;font-size:23px;line-height:23px;color:#000000;left:31.31px;transform-origin:0 0;transform:scaleX(0.9882);">Punjab</div><div class="t" style="top:620.83px;font-size:23px;line-height:23px;color:#000000;left:190.88px;width:600px;text-align:center;transform-origin:50% 0;transform:scaleX(0.9550);">30</div><div class="t" style="top:620.83px;font-size:23px;line-height:23px;color:#000000;left:502.40px;width:600px;text-align:center;transform-origin:50% 0;transform:scaleX(0.9550);">15</div><div class="t" style="top:620.83px;font-size:23px;line-height:23px;color:#000000;left:835.40px;width:600px;text-align:center;transform-origin:50% 0;transform:scaleX(0.9550);">15</div>
</body></html>
